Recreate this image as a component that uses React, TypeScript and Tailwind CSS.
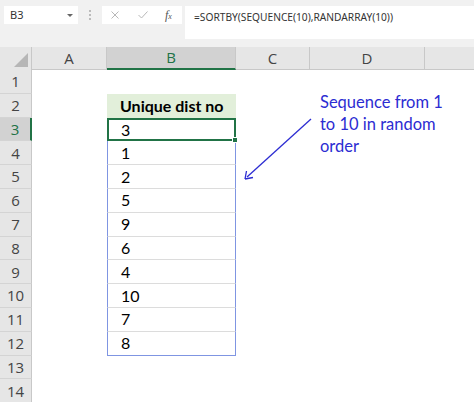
import React from 'react';

const cols = [
  { key: 'A', w: 'w-[75px]' },
  { key: 'B', w: 'w-[129px]' },
  { key: 'C', w: 'w-[74px]' },
  { key: 'D', w: 'w-[115px]' },
];

const values = ['3', '1', '2', '5', '9', '6', '4', '10', '7', '8'];

function BCell({ row }: { row: number }) {
  if (row === 2) {
    return (
      <div className="w-[129px] h-full bg-[#e2efda] flex items-center pl-[13px] font-bold text-black">
        Unique dist no
      </div>
    );
  }
  if (row === 3) {
    return (
      <div className="relative w-[129px] h-full border-2 border-[#217346] flex items-center pl-[12px] text-black">
        {values[0]}
        <span className="absolute -right-[4px] -bottom-[4px] w-[6px] h-[6px] bg-[#217346] border border-white" />
      </div>
    );
  }
  if (row >= 4 && row <= 12) {
    return (
      <div
        className={
          'w-[129px] h-full border-l border-r border-l-[#7f95e2] border-r-[#7f95e2] flex items-center pl-[13px] text-black ' +
          (row === 12 ? 'border-b border-b-[#7f95e2]' : 'border-b border-b-[#dcdcdc]')
        }
      >
        {values[row - 3]}
      </div>
    );
  }
  return <div className="w-[129px] h-full" />;
}

export default function App() {
  const rows = Array.from({ length: 14 }, (_, i) => i + 1);
  return (
    <div className="relative w-[474px] h-[402px] overflow-hidden bg-white font-['Lato','Open_Sans',sans-serif]">
      {/* formula bar */}
      <div className="h-[47px] bg-[#f1f1f1] relative">
        <div className="absolute left-[4px] top-[6px] w-[74px] h-[18px] bg-white flex items-center justify-between pl-[6px] pr-[5px] text-[11px] text-[#333] font-['Noto_Sans',sans-serif]">
          <span>B3</span>
          <span className="w-0 h-0 border-x-[3px] border-x-transparent border-t-[3px] border-t-[#666]" />
        </div>
        <div className="absolute left-[89px] top-[10px] flex flex-col gap-[2px]">
          <span className="w-[2px] h-[2px] bg-[#bbb]" />
          <span className="w-[2px] h-[2px] bg-[#bbb]" />
          <span className="w-[2px] h-[2px] bg-[#bbb]" />
        </div>
        <div className="absolute left-[102px] top-[6px] w-[80px] h-[18px] bg-white flex items-center">
          <svg className="ml-[9px]" width="8" height="8" viewBox="0 0 8 8">
            <path d="M0.5 0.5 L7.5 7.5 M7.5 0.5 L0.5 7.5" stroke="#b8b8b8" strokeWidth="1" fill="none" />
          </svg>
          <svg className="ml-[19px]" width="10" height="8" viewBox="0 0 10 8">
            <path d="M0.5 4 L3.5 7 L9.5 0.5" stroke="#b8b8b8" strokeWidth="1" fill="none" />
          </svg>
          <span className="ml-[17px] italic text-[12px] text-[#555] font-['Liberation_Serif',serif]">
            f<span className="text-[8px]">x</span>
          </span>
        </div>
        <div className="absolute left-[185px] top-[6px] right-0 h-[33px] bg-white pl-[9px] pt-[4px] text-[10.2px] text-[#333] font-['Noto_Sans',sans-serif] leading-[14px]">
          =SORTBY(SEQUENCE(10),RANDARRAY(10))
        </div>
      </div>

      {/* column headers */}
      <div className="flex h-[23px] bg-[#e6e6e6] text-[15px] text-[#444] font-['Open_Sans',sans-serif]">
        <div className="w-[32px] h-full relative border-r border-[#c8c8c8]">
          <svg className="absolute right-[3px] bottom-[3px]" width="14" height="14" viewBox="0 0 14 14">
            <path d="M14 0 L14 14 L0 14 Z" fill="#b6b6b6" />
          </svg>
        </div>
        {cols.map((c) => (
          <div
            key={c.key}
            className={
              c.w +
              ' h-full flex items-center justify-center border-r ' +
              (c.key === 'B'
                ? 'bg-[#d2d2d2] text-[#217346] border-b-2 border-b-[#217346] border-r-[#c8c8c8]'
                : 'border-[#c8c8c8] border-b border-b-[#c8c8c8]')
            }
          >
            {c.key}
          </div>
        ))}
        <div className="flex-1 h-full border-b border-[#c8c8c8]" />
      </div>

      {/* rows */}
      {rows.map((r) => (
        <div key={r} className="flex h-[23.8px] text-[16px]">
          <div
            className={
              'w-[32px] h-full flex items-center justify-center text-[15px] font-["Open_Sans",sans-serif] border-b border-[#d4d4d4] ' +
              (r === 3
                ? 'bg-[#d2d2d2] text-[#217346] border-r-2 border-r-[#217346]'
                : 'bg-[#e6e6e6] text-[#444] border-r border-r-[#c8c8c8]')
            }
          >
            {r}
          </div>
          <div className="w-[75px] h-full" />
          <BCell row={r} />
          <div className="flex-1 h-full" />
        </div>
      ))}

      {/* annotation */}
      <div className="absolute left-[320px] top-[91px] text-[16.5px] leading-[22px] text-[#2c2cd2]">
        <div>Sequence from 1</div>
        <div>to 10 in random</div>
        <div>order</div>
      </div>
      <svg className="absolute left-0 top-0 pointer-events-none" width="474" height="402">
        <line x1="311" y1="119" x2="247" y2="177" stroke="#2c2cd2" strokeWidth="1.3" />
        <path d="M245 179 L246.5 171 M245 179 L253 177.5" stroke="#2c2cd2" strokeWidth="1.3" fill="none" />
      </svg>
    </div>
  );
}
